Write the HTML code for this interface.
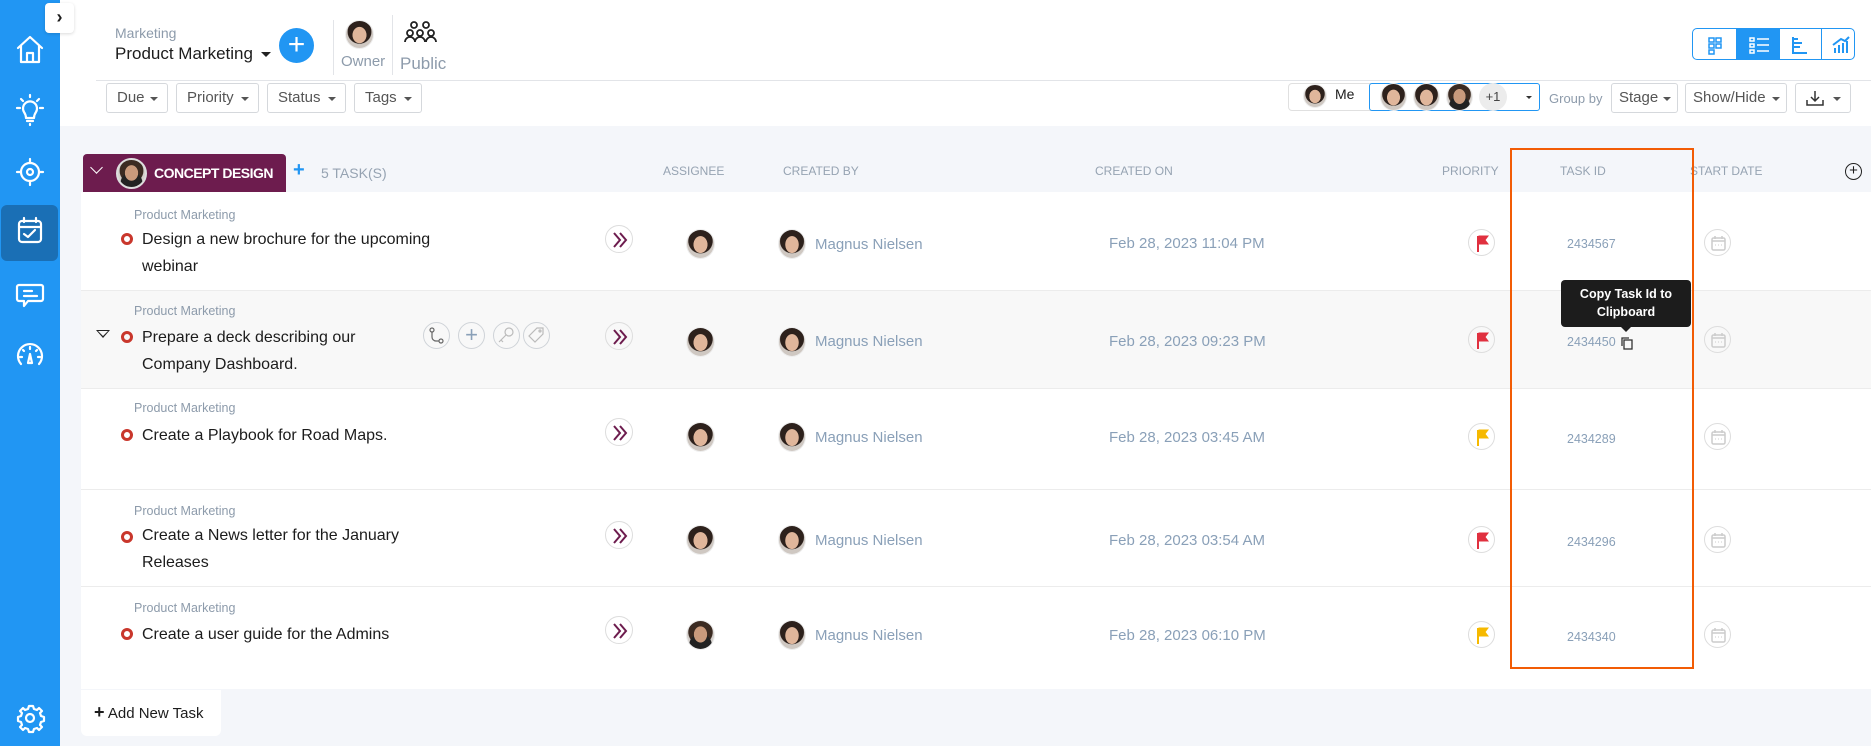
<!DOCTYPE html>
<html><head><meta charset="utf-8"><style>
*{margin:0;padding:0;box-sizing:border-box}
body{width:1871px;height:746px;overflow:hidden;background:#f4f6fa;font-family:"Liberation Sans",Arial,sans-serif;position:relative;color:#1c1c1c}
.a{position:absolute}
.sb{left:0;top:0;width:60px;height:746px;background:#2196f3}
.hdr{left:60px;top:0;width:1811px;height:126px;background:#fff}
.btn{position:absolute;top:83px;height:30px;border:1px solid #d5d8dc;border-radius:3px;background:#fff;font-size:15px;color:#555;line-height:28px;padding-left:10px}
.btn .c{position:absolute;right:9px;top:13px;border-left:4px solid transparent;border-right:4px solid transparent;border-top:4px solid #555}
.av{position:absolute;border-radius:50%;background:radial-gradient(ellipse 36% 42% at 50% 52%,#e0b69b 70%,transparent 74%),radial-gradient(circle at 50% 40%,#2d211c 55%,#cfc8c2 58%);border:1px solid #eee}
.avm{background:radial-gradient(ellipse 34% 40% at 50% 48%,#c99a7c 70%,transparent 74%),radial-gradient(circle at 50% 85%,#222 40%,transparent 42%),radial-gradient(circle at 50% 40%,#3b2b22 55%,#d5d0cc 58%)}
.card{left:81px;top:192px;width:1790px;height:497px;background:#fff}
.row{position:absolute;left:81px;width:1790px;border-bottom:1px solid #ececec}
.pm{position:absolute;left:134px;font-size:12.5px;color:#8d9bab}
.tt{position:absolute;left:142px;font-size:16px;line-height:27px;color:#1c1c1c}
.dot{position:absolute;left:121px;width:12px;height:12px;border-radius:50%;border:3.5px solid #c9372c}
.chev{position:absolute;left:605px;width:28px;height:28px;border-radius:50%;border:1px solid #ddd}
.nm{position:absolute;left:815px;font-size:15px;color:#8aa0b8}
.dt{position:absolute;left:1109px;font-size:15px;color:#8aa0b8}
.fl{position:absolute;left:1468px;width:27px;height:27px;border-radius:50%;border:1px solid #ddd}
.tid{position:absolute;left:1567px;font-size:12.5px;color:#8aa0b8}
.cal{position:absolute;left:1704px;width:27px;height:27px;border-radius:50%;border:1px solid #ddd}
.ch{position:absolute;top:164px;font-size:12px;color:#96a3b2}
.ic{position:absolute;width:27px;height:27px;border-radius:50%;border:1px solid #cfd3d8}
</style></head><body>
<div class="a sb"></div>
<div class="a" style="left:1px;top:205px;width:57px;height:56px;background:#1a6fb5;border-radius:6px"></div>
<svg class="a" style="left:0;top:0" width="60" height="746" fill="none" stroke="#fff" stroke-width="2.2" stroke-linecap="round" stroke-linejoin="round">
<path d="M18 48 L30 37 L42 48 M21 46 V62 H39 V46 M27 62 V53 H33 V62"/>
<path d="M24 112 a7 7 0 1 1 12 0 q-2 3-2 6 h-8 q0-3-2-6z M27 121 h6 M30 124 v1 M17 108 h3 M40 108 h3 M21 99 l2 2 M39 99 l-2 2 M30 95 v2"/>
<circle cx="30" cy="172" r="9"/><circle cx="30" cy="172" r="3"/><path d="M30 159 v4 M30 181 v4 M17 172 h4 M39 172 h4"/>
<rect x="19" y="221" width="22" height="21" rx="3"/><path d="M19 227 h22 M24 218 v4 M36 218 v4 M24 234 l4 3 7-7"/>
<path d="M19 285 h22 a2 2 0 0 1 2 2 v12 a2 2 0 0 1-2 2 h-13 l-4 5 v-5 h-5 a2 2 0 0 1-2-2 v-12 a2 2 0 0 1 2-2z M24 291 h8 M24 296 h13"/>
<path d="M21 364 a12 12 0 1 1 18 0"/><path d="M30 354 l-2 9 h4z M30 347 v2 M23 350 l1 1 M37 350 l-1 1 M20 357 h2 M38 357 h2"/>
<circle cx="30" cy="718" r="4"/><path d="M30 706 l3 0 1 3 3 1 2-2 3 3-2 2 1 3 3 1 v4 l-3 1-1 3 2 2-3 3-2-2-3 1-1 3 h-4 l-1-3-3-1-2 2-3-3 2-2-1-3-3-1 v-4 l3-1 1-3-2-2 3-3 2 2 3-1 1-3z"/>
</svg>
<div class="a hdr"></div>
<div class="a" style="left:45px;top:3px;width:29px;height:30px;background:#fff;border-radius:4px;box-shadow:0 1px 3px rgba(0,0,0,.15);text-align:center;font-size:18px;line-height:28px;font-weight:bold">›</div>
<div class="a" style="left:115px;top:25px;font-size:14px;color:#8d9bab">Marketing</div>
<div class="a" style="left:115px;top:44px;font-size:17px;color:#1c1c1c">Product Marketing <span style="display:inline-block;border-left:5px solid transparent;border-right:5px solid transparent;border-top:5px solid #222;vertical-align:middle;margin-left:3px"></span></div>
<div class="a" style="left:279px;top:28px;width:35px;height:35px;border-radius:50%;background:#2196f3;color:#fff;font-size:30px;line-height:33px;text-align:center">+</div>
<div class="a" style="left:333px;top:20px;width:1px;height:55px;background:#e2e4e8"></div>
<div class="av" style="left:345px;top:20px;width:29px;height:29px"></div>
<div class="a" style="left:341px;top:53px;font-size:15px;color:#8d9bab">Owner</div>
<div class="a" style="left:392px;top:15px;width:1px;height:60px;background:#e2e4e8"></div>
<svg class="a" style="left:404px;top:21px" width="33" height="22" fill="none" stroke="#222" stroke-width="1.8"><circle cx="10" cy="4" r="3"/><circle cx="22" cy="4" r="3"/><circle cx="6" cy="12" r="3"/><circle cx="16" cy="12" r="3"/><circle cx="27" cy="12" r="3"/><path d="M1 21 a5 5 0 0 1 10 0 M11 21 a5 5 0 0 1 10 0 M22 21 a5 5 0 0 1 10 0"/></svg>
<div class="a" style="left:400px;top:54px;font-size:17px;color:#8d9bab">Public</div>
<div class="a" style="left:96px;top:80px;width:1775px;height:1px;background:#e2e4e8"></div>
<div class="btn" style="left:106px;width:62px">Due<span class="c"></span></div>
<div class="btn" style="left:176px;width:83px">Priority<span class="c"></span></div>
<div class="btn" style="left:267px;width:79px">Status<span class="c"></span></div>
<div class="btn" style="left:354px;width:68px">Tags<span class="c"></span></div>
<div class="a" style="left:1692px;top:28px;width:163px;height:32px;border:1px solid #2196f3;border-radius:5px;overflow:hidden;background:#fff">
<div class="a" style="left:43px;top:0;width:44px;height:32px;background:#2196f3"></div>
<div class="a" style="left:86px;top:0;width:1px;height:32px;background:#2196f3"></div>
<div class="a" style="left:128px;top:0;width:1px;height:32px;background:#2196f3"></div>
<svg class="a" style="left:0;top:0" width="163" height="32" fill="none" stroke-width="1.5"><g stroke="#2196f3"><rect x="16" y="9" width="5" height="4"/><rect x="23" y="9" width="5" height="4"/><rect x="16" y="15" width="5" height="4"/><rect x="23" y="15" width="5" height="4"/><rect x="16" y="21" width="5" height="4"/></g><g stroke="#fff"><rect x="57" y="9" width="4" height="3"/><rect x="57" y="15" width="4" height="3"/><rect x="57" y="21" width="4" height="3"/><path d="M64 10h12M64 16h12M64 22h12"/></g><g stroke="#2196f3" stroke-width="2"><path d="M100 8v17M100 10h5M100 14h9M100 18h7M100 24h14"/><path d="M142 24v-5M146 24v-8M150 24v-10M154 24v-12M140 16l8-6 4 2 4-4"/></g></svg>
</div>
<div class="a" style="left:1288px;top:83px;width:90px;height:28px;border:1px solid #e0e0e0;border-radius:4px;background:#fff"></div>
<div class="av" style="left:1303px;top:84px;width:24px;height:24px"></div>
<div class="a" style="left:1335px;top:86px;font-size:14px">Me</div>
<div class="a" style="left:1369px;top:83px;width:171px;height:28px;border:1px solid #2196f3;border-radius:3px;background:#fff"></div>
<div class="av" style="left:1380px;top:83px;width:27px;height:28px"></div>
<div class="av" style="left:1413px;top:83px;width:27px;height:28px"></div>
<div class="av avm" style="left:1446px;top:83px;width:27px;height:28px"></div>
<div class="a" style="left:1479px;top:83px;width:28px;height:28px;border-radius:50%;background:#ececec;font-size:13px;line-height:28px;text-align:center;color:#444">+1</div>
<div class="a" style="left:1526px;top:96px;border-left:3px solid transparent;border-right:3px solid transparent;border-top:3px solid #333"></div>
<div class="a" style="left:1549px;top:91px;font-size:13px;color:#8d9bab">Group by</div>
<div class="btn" style="left:1611px;width:67px;font-size:15px;padding-left:7px">Stage<span class="c" style="right:6px"></span></div>
<div class="btn" style="left:1685px;width:102px;font-size:15px;padding-left:7px">Show/Hide<span class="c" style="right:6px"></span></div>
<div class="btn" style="left:1795px;width:56px"><svg class="a" style="left:10px;top:6px" width="18" height="16" fill="none" stroke="#333" stroke-width="1.5"><path d="M9 1v10M5 7l4 4 4-4M1 10v5h16v-5"/></svg><span class="c"></span></div>
<div class="a" style="left:83px;top:154px;width:203px;height:38px;background:#6d1c4e;border-radius:4px 4px 0 0"></div>
<div class="a" style="left:92px;top:163px;width:9px;height:9px;border-right:1.5px solid #fff;border-bottom:1.5px solid #fff;transform:rotate(45deg)"></div>
<div class="av avm" style="left:116px;top:158px;width:31px;height:31px;border:2px solid #ddd"></div>
<div class="a" style="left:154px;top:165px;font-size:14px;font-weight:bold;color:#fff;letter-spacing:-0.5px">CONCEPT DESIGN</div>
<div class="a" style="left:293px;top:159px;font-size:20px;color:#2196f3;font-weight:bold">+</div>
<div class="a" style="left:321px;top:165px;font-size:14px;color:#96a3b2">5 TASK(S)</div>
<div class="ch" style="left:663px">ASSIGNEE</div>
<div class="ch" style="left:783px">CREATED BY</div>
<div class="ch" style="left:1095px">CREATED ON</div>
<div class="ch" style="left:1442px">PRIORITY</div>
<div class="ch" style="left:1560px">TASK ID</div>
<div class="ch" style="left:1690px">START DATE</div>
<div class="a" style="left:1845px;top:163px;width:17px;height:17px;border:1.5px solid #222;border-radius:50%;text-align:center;font-size:15px;line-height:14px">+</div>
<div class="a card"></div>
<div class="row" style="top:192px;height:99px"></div>
<div class="row" style="top:291px;height:98px;background:#f8f8f8"></div>
<div class="row" style="top:389px;height:101px"></div>
<div class="row" style="top:490px;height:97px"></div>
<div class="row" style="top:587px;height:102px;border:0"></div>
<div class="a" style="left:81px;top:690px;width:140px;height:46px;background:#fff;border-radius:0 0 6px 6px;font-size:15px;line-height:44px;padding-left:13px"><b style="font-size:18px">+</b> Add New Task</div>

<div class="pm" style="top:208px">Product Marketing</div>
<div class="dot" style="top:233px"></div>
<div class="tt" style="top:226px">Design a new brochure for the upcoming<br>webinar</div>
<div class="pm" style="top:304px">Product Marketing</div>
<div class="a" style="left:96px;top:330px;border-left:7px solid transparent;border-right:7px solid transparent;border-top:8px solid #222"></div>
<div class="a" style="left:98px;top:331px;border-left:5px solid transparent;border-right:5px solid transparent;border-top:5.5px solid #f8f8f8"></div>
<div class="dot" style="top:331px"></div>
<div class="tt" style="top:324px">Prepare a deck describing our<br>Company Dashboard.</div>
<div class="ic" style="left:423px;top:322px"><svg width="25" height="25" fill="none" stroke="#666" stroke-width="1.2"><circle cx="8" cy="7" r="2"/><circle cx="17" cy="18" r="2"/><path d="M8 9v5a4 4 0 0 0 4 4h3"/></svg></div>
<div class="ic" style="left:458px;top:322px;text-align:center;font-size:22px;line-height:24px;color:#8aa0b8">+</div>
<div class="ic" style="left:493px;top:322px"><svg width="25" height="25" fill="none" stroke="#bbb" stroke-width="1.2"><circle cx="15" cy="9" r="4"/><path d="M12 12l-7 7M7 17l2 2"/></svg></div>
<div class="ic" style="left:523px;top:322px"><svg width="25" height="25" fill="none" stroke="#bbb" stroke-width="1.2"><path d="M13 5h6v6l-8 8-6-6z"/><circle cx="16" cy="8" r="1"/></svg></div>
<div class="pm" style="top:401px">Product Marketing</div>
<div class="dot" style="top:429px"></div>
<div class="tt" style="top:422px">Create a Playbook for Road Maps.</div>
<div class="pm" style="top:504px">Product Marketing</div>
<div class="dot" style="top:531px"></div>
<div class="tt" style="top:522px">Create a News letter for the January<br>Releases</div>
<div class="pm" style="top:601px">Product Marketing</div>
<div class="dot" style="top:628px"></div>
<div class="tt" style="top:621px">Create a user guide for the Admins</div>

<svg width="0" height="0" style="position:absolute"><defs><g id="f"><path d="M9 6v16" stroke-width="2"/><path d="M10 6h9l-3 4 3 4h-9z"/></g><g id="c"><rect x="7" y="8" width="13" height="12" rx="1.5" fill="none" stroke="#ccc" stroke-width="1.5"/><path d="M7 11h13M10 6v3M17 6v3" stroke="#ccc" stroke-width="1.5"/><path d="M10 15h1M13 15h1M16 15h1" stroke="#ccc"/></g><path id="v" d="M8 7l6 7-6 7M14 7l6 7-6 7" fill="none" stroke="#6d1c4e" stroke-width="2"/></defs></svg>
<div class="chev" style="top:225px"><svg width="26" height="26"><use href="#v"/></svg></div><div class="av" style="left:686px;top:229px;width:29px;height:30px"></div><div class="av" style="left:778px;top:229px;width:28px;height:30px"></div><div class="nm" style="top:236px">Magnus Nielsen</div><div class="dt" style="top:235px">Feb 28, 2023 11:04 PM</div>
<div class="chev" style="top:322px"><svg width="26" height="26"><use href="#v"/></svg></div><div class="av" style="left:686px;top:327px;width:29px;height:30px"></div><div class="av" style="left:778px;top:327px;width:28px;height:30px"></div><div class="nm" style="top:333px">Magnus Nielsen</div><div class="dt" style="top:333px">Feb 28, 2023 09:23 PM</div>
<div class="chev" style="top:418px"><svg width="26" height="26"><use href="#v"/></svg></div><div class="av" style="left:686px;top:422px;width:29px;height:30px"></div><div class="av" style="left:778px;top:422px;width:28px;height:30px"></div><div class="nm" style="top:429px">Magnus Nielsen</div><div class="dt" style="top:429px">Feb 28, 2023 03:45 AM</div>
<div class="chev" style="top:521px"><svg width="26" height="26"><use href="#v"/></svg></div><div class="av" style="left:686px;top:525px;width:29px;height:30px"></div><div class="av" style="left:778px;top:525px;width:28px;height:30px"></div><div class="nm" style="top:532px">Magnus Nielsen</div><div class="dt" style="top:532px">Feb 28, 2023 03:54 AM</div>
<div class="chev" style="top:616px"><svg width="26" height="26"><use href="#v"/></svg></div><div class="av avm" style="left:686px;top:620px;width:29px;height:30px"></div><div class="av" style="left:778px;top:620px;width:28px;height:30px"></div><div class="nm" style="top:627px">Magnus Nielsen</div><div class="dt" style="top:627px">Feb 28, 2023 06:10 PM</div>

<div class="fl" style="top:229px"><svg width="27" height="27" fill="#e0303f" stroke="#e0303f"><use href="#f"/></svg></div>
<div class="fl" style="top:326px"><svg width="27" height="27" fill="#e0303f" stroke="#e0303f"><use href="#f"/></svg></div>
<div class="fl" style="top:423px"><svg width="27" height="27" fill="#f6b900" stroke="#f6b900"><use href="#f"/></svg></div>
<div class="fl" style="top:526px"><svg width="27" height="27" fill="#e0303f" stroke="#e0303f"><use href="#f"/></svg></div>
<div class="fl" style="top:621px"><svg width="27" height="27" fill="#f6b900" stroke="#f6b900"><use href="#f"/></svg></div>
<div class="tid" style="top:237px">2434567</div>
<div class="tid" style="top:335px">2434450</div>
<svg class="a" style="left:1620px;top:336px" width="14" height="14" fill="none" stroke="#333" stroke-width="1.3"><rect x="4" y="4" width="8" height="9"/><path d="M2 10V2h7"/></svg>
<div class="tid" style="top:432px">2434289</div>
<div class="tid" style="top:535px">2434296</div>
<div class="tid" style="top:630px">2434340</div>
<div class="cal" style="top:229px"><svg width="27" height="27"><use href="#c"/></svg></div>
<div class="cal" style="top:326px"><svg width="27" height="27"><use href="#c"/></svg></div>
<div class="cal" style="top:423px"><svg width="27" height="27"><use href="#c"/></svg></div>
<div class="cal" style="top:526px"><svg width="27" height="27"><use href="#c"/></svg></div>
<div class="cal" style="top:621px"><svg width="27" height="27"><use href="#c"/></svg></div>
<div class="a" style="left:1561px;top:280px;width:130px;height:47px;background:#1c1c1c;border-radius:4px;color:#fff;font-size:12.5px;font-weight:bold;text-align:center;line-height:18px;padding-top:5px">Copy Task Id to<br>Clipboard</div>
<div class="a" style="left:1621px;top:327px;border-left:5px solid transparent;border-right:5px solid transparent;border-top:5px solid #1c1c1c"></div>
<div class="a" style="left:1510px;top:148px;width:184px;height:521px;border:2px solid #f25c05"></div>
</body></html>
